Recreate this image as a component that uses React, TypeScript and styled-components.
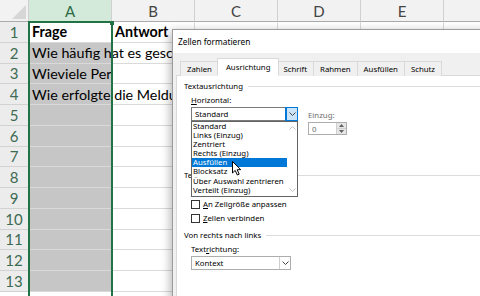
import React from "react";
import styled, { createGlobalStyle } from "styled-components";

const GlobalStyle = createGlobalStyle`
  html, body { margin: 0; padding: 0; background: #fff; }
  body { width: 480px; height: 296px; overflow: hidden; }
  * { box-sizing: border-box; }
`;

const Screen = styled.div`
  position: relative;
  width: 480px;
  height: 296px;
  overflow: hidden;
  background: #fff;
`;

/* ---------- spreadsheet ---------- */
const Sheet = styled.div`
  display: grid;
  grid-template-columns: 29px repeat(6, 83px);
  grid-template-rows: 22px repeat(13, 20.75px);
  font-family: Lato, "Liberation Sans", sans-serif;
  font-size: 14.3px;
  color: #000;
`;

const Corner = styled.div`
  position: relative;
  background: #f2f2f2;
  border-right: 1px solid #cfcfcf;
  border-bottom: 1px solid #ababab;
  &::after {
    content: "";
    position: absolute;
    right: 2px;
    bottom: 2px;
    border-style: solid;
    border-width: 0 0 14px 14px;
    border-color: transparent transparent #d6d6d6 transparent;
  }
`;

const ColHeader = styled.div<{ $active?: boolean }>`
  display: flex;
  align-items: center;
  justify-content: center;
  font-size: 15px;
  background: ${(p) => (p.$active ? "#d3e9da" : "#f2f2f2")};
  color: ${(p) => (p.$active ? "#2a6a45" : "#444")};
  border-right: 1px solid #d0d0d0;
  border-bottom: 1px solid #ababab;
`;

const RowHeader = styled.div`
  display: flex;
  align-items: center;
  justify-content: center;
  font-size: 15px;
  background: #ececec;
  color: #3d6a52;
  border-right: 1px solid #cfcfcf;
  border-bottom: 1px solid #d2d2d2;
`;

const Cell = styled.div<{ $selected?: boolean; $bold?: boolean; $clip?: boolean }>`
  display: flex;
  align-items: center;
  padding: 0 3px;
  white-space: nowrap;
  overflow: ${(p) => (p.$clip ? "hidden" : "visible")};
  font-weight: ${(p) => (p.$bold ? 700 : 400)};
  background: ${(p) => (p.$selected ? "#c6c6c6" : "transparent")};
  border-right: 1px solid ${(p) => (p.$selected ? "#c6c6c6" : "#dadada")};
  border-bottom: 1px solid ${(p) => (p.$selected ? "#d9d9d9" : "#dadada")};
`;

const Selection = styled.div`
  position: absolute;
  left: 28px;
  top: 21px;
  width: 85px;
  height: 290px;
  border: 2px solid #217346;
  pointer-events: none;
`;

const Handle = styled.div`
  position: absolute;
  right: -3px;
  top: -2px;
  width: 4px;
  height: 4px;
  background: #217346;
`;

/* ---------- dialog ---------- */
const Dialog = styled.div`
  position: absolute;
  left: 172px;
  top: 29px;
  width: 340px;
  height: 300px;
  display: flex;
  flex-direction: column;
  background: #fff;
  border: 1px solid #9c9c9c;
  box-shadow: -2px 2px 9px rgba(0, 0, 0, 0.28);
  font-family: "Noto Sans", "Open Sans", sans-serif;
  font-size: 7.8px;
  color: #000;
`;

const TitleBar = styled.div`
  height: 23px;
  display: flex;
  align-items: center;
  padding-left: 5px;
  font-size: 8.3px;
  background: #fff;
`;

const Client = styled.div`
  flex: 1;
  display: flex;
  flex-direction: column;
  background: #f0f0f0;
  padding: 5px 0 0 3px;
`;

const TabRow = styled.div`
  display: flex;
  align-items: flex-end;
  height: 18px;
  padding-left: 5px;
  margin-bottom: -1px;
  position: relative;
  z-index: 1;
`;

const Tab = styled.div<{ $selected?: boolean }>`
  display: flex;
  align-items: center;
  justify-content: center;
  height: ${(p) => (p.$selected ? "18px" : "15px")};
  padding: 0 ${(p) => (p.$selected ? "8px" : "6px")};
  margin-right: ${(p) => (p.$selected ? "-2px" : "0")};
  margin-left: ${(p) => (p.$selected ? "-2px" : "-1px")};
  background: ${(p) => (p.$selected ? "#fff" : "#f0f0f0")};
  border: 1px solid #d9d9d9;
  border-bottom: ${(p) => (p.$selected ? "1px solid #fff" : "none")};
  position: relative;
  z-index: ${(p) => (p.$selected ? 2 : 1)};
  padding-bottom: ${(p) => (p.$selected ? "1px" : "0")};
`;

const Panel = styled.div`
  flex: 1;
  background: #fff;
  border: 1px solid #d9d9d9;
  padding: 5px 0 0 7px;
  display: flex;
  flex-direction: column;
`;

const GroupHeader = styled.div<{ $top?: number }>`
  display: flex;
  align-items: center;
  height: 10px;
  margin-top: ${(p) => p.$top ?? 0}px;
  white-space: nowrap;
  &::after {
    content: "";
    flex: 1;
    height: 1px;
    margin-left: 5px;
    background: #dcdcdc;
  }
`;

const Indent = styled.div`
  padding-left: 7px;
  display: flex;
  flex-direction: column;
`;

const Label = styled.div<{ $top?: number; $disabled?: boolean }>`
  height: 10px;
  line-height: 10px;
  margin-top: ${(p) => p.$top ?? 0}px;
  color: ${(p) => (p.$disabled ? "#6d6d6d" : "#000")};
  white-space: nowrap;
`;

const Key = styled.span`
  text-decoration: underline;
`;

const FieldRow = styled.div`
  display: flex;
  align-items: flex-start;
  margin-top: 4px;
`;

const FieldCol = styled.div<{ $top?: number; $left?: number }>`
  display: flex;
  flex-direction: column;
  margin-top: ${(p) => p.$top ?? 0}px;
  margin-left: ${(p) => p.$left ?? 0}px;
`;

const SelectWrap = styled.div`
  position: relative;
  margin-top: 2px;
`;

const SelectBox = styled.div<{ $width: number; $open?: boolean }>`
  width: ${(p) => p.$width}px;
  height: 14px;
  display: flex;
  border: 1px solid ${(p) => (p.$open ? "#7a7a7a" : "#adadad")};
  background: #fff;
`;

const SelectValue = styled.div`
  flex: 1;
  display: flex;
  align-items: center;
  padding-left: 3px;
`;

const SelectButton = styled.div<{ $open?: boolean }>`
  width: 11px;
  display: flex;
  align-items: center;
  justify-content: center;
  background: ${(p) => (p.$open ? "#cce4f7" : "#fff")};
  border-left: 1px solid ${(p) => (p.$open ? "#0078d7" : "#cfcfcf")};
  outline: ${(p) => (p.$open ? "1px solid #0078d7" : "none")};
  color: #444;
`;

const ListBox = styled.div`
  position: absolute;
  left: 0;
  top: 100%;
  width: 107px;
  height: 76px;
  display: flex;
  background: #fff;
  border: 1px solid #646464;
  overflow: hidden;
  z-index: 5;
`;

const ListItems = styled.div`
  flex: 1;
  display: flex;
  flex-direction: column;
`;

const ListItem = styled.div<{ $active?: boolean }>`
  height: 9.1px;
  line-height: 9.1px;
  padding-left: 1px;
  white-space: nowrap;
  background: ${(p) => (p.$active ? "#0078d7" : "transparent")};
  color: ${(p) => (p.$active ? "#fff" : "#000")};
`;

const ScrollBar = styled.div`
  width: 10px;
  display: flex;
  flex-direction: column;
  justify-content: space-between;
  align-items: center;
  padding: 4px 0 4px;
  color: #c2c2c2;
`;

const Spinner = styled.div`
  display: flex;
  margin-top: 2px;
  height: 13px;
  width: 39px;
  border: 1px solid #adadad;
  background: #fff;
`;

const SpinValue = styled.div`
  flex: 1;
  display: flex;
  align-items: center;
  padding-left: 3px;
  color: #6d6d6d;
`;

const SpinButtons = styled.div`
  width: 10px;
  display: flex;
  flex-direction: column;
  border-left: 1px solid #cfcfcf;
  background: #e6e6e6;
`;

const SpinButton = styled.div`
  flex: 1;
  display: flex;
  align-items: center;
  justify-content: center;
  color: #606060;
  & + & { border-top: 1px solid #cfcfcf; }
`;

const CheckRow = styled.div<{ $top?: number }>`
  display: flex;
  align-items: center;
  height: 14px;
  margin-top: ${(p) => p.$top ?? 0}px;
  white-space: nowrap;
`;

const CheckBox = styled.div`
  width: 9px;
  height: 9px;
  border: 1px solid #333;
  background: #fff;
  margin-right: 3px;
`;

const Pointer = styled.svg`
  position: absolute;
  left: 232px;
  top: 161px;
  z-index: 10;
`;

const Chevron = ({ up }: { up?: boolean }) => (
  <svg width="7" height="4" viewBox="0 0 7 4">
    <path
      d={up ? "M0.5 3.5 L3.5 0.5 L6.5 3.5" : "M0.5 0.5 L3.5 3.5 L6.5 0.5"}
      fill="none"
      stroke="currentColor"
      strokeWidth="1"
    />
  </svg>
);

const Triangle = ({ up }: { up?: boolean }) => (
  <svg width="5" height="3" viewBox="0 0 5 3">
    <path d={up ? "M0 3 L2.5 0 L5 3 Z" : "M0 0 L2.5 3 L5 0 Z"} fill="currentColor" />
  </svg>
);

const columns = ["A", "B", "C", "D", "E", ""];

type RowData = { a?: string; b?: string; bold?: boolean; clip?: boolean };

const rows: RowData[] = [
  { a: "Frage", b: "Antwort", bold: true },
  { a: "Wie häufig hat es geschehen?" },
  { a: "Wieviele Personen waren beteiligt?", clip: true },
  { a: "Wie erfolgte die Meldung?" },
  {}, {}, {}, {}, {}, {}, {}, {}, {},
];

const tabs = ["Zahlen", "Ausrichtung", "Schrift", "Rahmen", "Ausfüllen", "Schutz"];

const options = [
  "Standard",
  "Links (Einzug)",
  "Zentriert",
  "Rechts (Einzug)",
  "Ausfüllen",
  "Blocksatz",
  "Über Auswahl zentrieren",
  "Verteilt (Einzug)",
];

export default function App() {
  return (
    <Screen>
      <GlobalStyle />
      <Sheet>
        <Corner />
        {columns.map((c, i) => (
          <ColHeader key={i} $active={c === "A"}>
            {c}
          </ColHeader>
        ))}
        {rows.map((r, i) => (
          <React.Fragment key={i}>
            <RowHeader>{i + 1}</RowHeader>
            <Cell $selected={i > 0} $bold={r.bold} $clip={r.clip}>
              {r.a}
            </Cell>
            <Cell $bold={r.bold}>{r.b}</Cell>
            <Cell />
            <Cell />
            <Cell />
            <Cell />
          </React.Fragment>
        ))}
      </Sheet>
      <Selection>
        <Handle />
      </Selection>

      <Dialog>
        <TitleBar>Zellen formatieren</TitleBar>
        <Client>
          <TabRow>
            {tabs.map((t) => (
              <Tab key={t} $selected={t === "Ausrichtung"}>
                {t}
              </Tab>
            ))}
          </TabRow>
          <Panel>
            <GroupHeader>Textausrichtung</GroupHeader>
            <Indent>
              <FieldRow>
                <FieldCol>
                  <Label>
                    <Key>H</Key>orizontal:
                  </Label>
                  <SelectWrap>
                    <SelectBox $width={107} $open>
                      <SelectValue>Standard</SelectValue>
                      <SelectButton $open>
                        <Chevron />
                      </SelectButton>
                    </SelectBox>
                    <ListBox>
                      <ListItems>
                        {options.map((o) => (
                          <ListItem key={o} $active={o === "Ausfüllen"}>
                            {o}
                          </ListItem>
                        ))}
                      </ListItems>
                      <ScrollBar>
                        <Chevron up />
                        <Chevron />
                      </ScrollBar>
                    </ListBox>
                  </SelectWrap>
                </FieldCol>
                <FieldCol $top={15} $left={10}>
                  <Label $disabled>Einzug:</Label>
                  <Spinner>
                    <SpinValue>0</SpinValue>
                    <SpinButtons>
                      <SpinButton>
                        <Triangle up />
                      </SpinButton>
                      <SpinButton>
                        <Triangle />
                      </SpinButton>
                    </SpinButtons>
                  </Spinner>
                </FieldCol>
              </FieldRow>
            </Indent>

            <GroupHeader $top={35}>Textsteuerung</GroupHeader>
            <Indent>
              <CheckRow $top={17}>
                <CheckBox />
                <span>
                  <Key>A</Key>n Zellgröße anpassen
                </span>
              </CheckRow>
              <CheckRow>
                <CheckBox />
                <span>
                  <Key>Z</Key>ellen verbinden
                </span>
              </CheckRow>
            </Indent>

            <GroupHeader $top={5}>Von rechts nach links</GroupHeader>
            <Indent>
              <Label $top={4}>
                Text<Key>r</Key>ichtung:
              </Label>
              <SelectWrap>
                <SelectBox $width={100}>
                  <SelectValue>Kontext</SelectValue>
                  <SelectButton>
                    <Chevron />
                  </SelectButton>
                </SelectBox>
              </SelectWrap>
            </Indent>
          </Panel>
        </Client>
      </Dialog>

      <Pointer width="10" height="15" viewBox="0 0 10 15">
        <path
          d="M0.5 0.5 L0.5 12 L3.2 9.4 L5.3 14 L7.2 13.2 L5.2 8.7 L8.8 8.7 Z"
          fill="#fff"
          stroke="#000"
          strokeWidth="1"
          strokeLinejoin="round"
        />
      </Pointer>
    </Screen>
  );
}
